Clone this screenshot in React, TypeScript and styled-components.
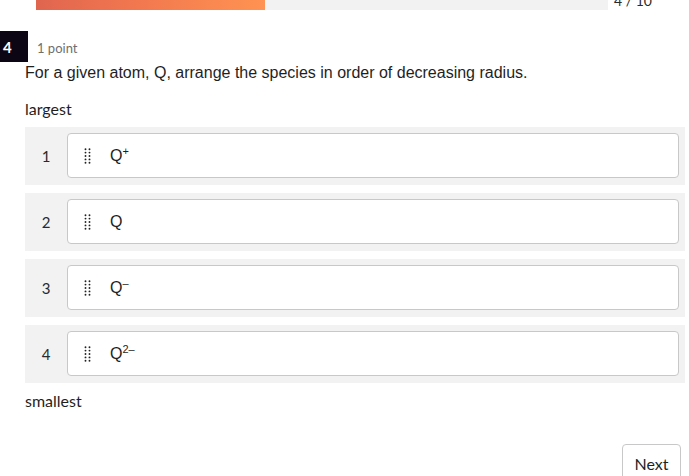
import React from 'react';
import styled, { createGlobalStyle } from 'styled-components';

const GlobalStyle = createGlobalStyle`
  html, body {
    margin: 0;
    padding: 0;
    background: #ffffff;
    overflow: hidden;
  }
  body {
    font-family: Lato, 'Open Sans', sans-serif;
    color: #1f1f1f;
  }
`;

const Page = styled.div`
  width: 689px;
  height: 476px;
  display: flex;
  flex-direction: column;
`;

const ProgressHeader = styled.div`
  display: flex;
  align-items: flex-start;
  height: 10px;
  padding-left: 36px;
`;

const Track = styled.div`
  width: 572px;
  height: 10px;
  background: #f2f2f2;
  display: flex;
`;

const Fill = styled.div`
  height: 100%;
  background: linear-gradient(90deg, #e0654f 0%, #f2784f 45%, #ff9352 100%);
`;

const Counter = styled.div`
  margin-left: 6px;
  margin-top: -7px;
  font-size: 14px;
  line-height: 16px;
  color: #2a2a2a;
  white-space: nowrap;
`;

const QuestionHeader = styled.div`
  display: flex;
  align-items: center;
  margin-top: 21px;
`;

const Badge = styled.div`
  width: 28px;
  height: 31px;
  background: #0b0514;
  color: #ffffff;
  font-size: 15px;
  font-weight: 700;
  display: flex;
  align-items: center;
  padding-left: 3px;
  box-sizing: border-box;
`;

const Points = styled.span`
  margin-left: 9px;
  margin-top: 3px;
  font-size: 13px;
  color: #6f6f6f;
`;

const Prompt = styled.p`
  margin: 2px 0 0 25px;
  font-family: 'Liberation Sans', Arial, sans-serif;
  font-size: 16px;
  line-height: 18px;
  color: #1f1f1f;
`;

const EndLabel = styled.div<{ $top: number }>`
  margin: ${(p) => p.$top}px 0 0 25px;
  font-size: 16px;
  line-height: 18px;
  color: #1f1f1f;
`;

const List = styled.div`
  display: flex;
  flex-direction: column;
  gap: 8px;
  margin: 9px 4px 0 25px;
`;

const Row = styled.div`
  display: flex;
  align-items: stretch;
  height: 58px;
  box-sizing: border-box;
  padding: 6px 6px 7px 0;
  background: #f2f2f2;
`;

const Rank = styled.div`
  width: 42px;
  display: flex;
  align-items: center;
  justify-content: center;
  font-size: 15px;
  color: #2a2a2a;
  padding-top: 1px;
`;

const Card = styled.div`
  flex: 1;
  display: flex;
  align-items: center;
  gap: 18px;
  padding-left: 16px;
  background: #ffffff;
  border: 1px solid #c8c8c8;
  border-radius: 4px;
`;

const Species = styled.span`
  font-family: 'Liberation Sans', Arial, sans-serif;
  font-size: 16px;
  color: #1f1f1f;

  sup {
    font-size: 11px;
    line-height: 0;
    vertical-align: 6px;
  }
`;

const Divider = styled.div`
  margin-top: 22px;
  height: 1px;
  background: #e4e4e4;
`;

const Footer = styled.div`
  display: flex;
  justify-content: flex-end;
  padding: 12px 8px 0 0;
`;

const NextButton = styled.button`
  width: 59px;
  height: 40px;
  padding: 0 0 1px;
  font-family: Lato, 'Open Sans', sans-serif;
  font-size: 16px;
  color: #1f1f1f;
  background: #ffffff;
  border: 1px solid #c8c8c8;
  border-radius: 4px;
`;

const DragHandle = () => (
  <svg width="8" height="16" viewBox="0 0 8 16" aria-hidden>
    {[1.2, 4.6, 8, 11.4, 14.8].map((y) =>
      [1.5, 5.5].map((x) => <circle key={`${x}-${y}`} cx={x} cy={y} r="0.95" fill="#222" />)
    )}
  </svg>
);

const items: { base: string; charge?: string }[] = [
  { base: 'Q', charge: '+' },
  { base: 'Q' },
  { base: 'Q', charge: '–' },
  { base: 'Q', charge: '2–' },
];

export default function App() {
  const answered = 4;
  const total = 10;
  return (
    <>
      <GlobalStyle />
      <Page>
        <ProgressHeader>
          <Track>
            <Fill style={{ width: `${(229 / 572) * 100}%` }} />
          </Track>
          <Counter>
            {answered} / {total}
          </Counter>
        </ProgressHeader>

        <QuestionHeader>
          <Badge>4</Badge>
          <Points>1 point</Points>
        </QuestionHeader>
        <Prompt>For a given atom, Q, arrange the species in order of decreasing radius.</Prompt>

        <EndLabel $top={18}>largest</EndLabel>
        <List>
          {items.map((item, i) => (
            <Row key={i}>
              <Rank>{i + 1}</Rank>
              <Card>
                <DragHandle />
                <Species>
                  {item.base}
                  {item.charge && <sup>{item.charge}</sup>}
                </Species>
              </Card>
            </Row>
          ))}
        </List>
        <EndLabel $top={9}>smallest</EndLabel>

        <Divider />
        <Footer>
          <NextButton>Next</NextButton>
        </Footer>
      </Page>
    </>
  );
}
